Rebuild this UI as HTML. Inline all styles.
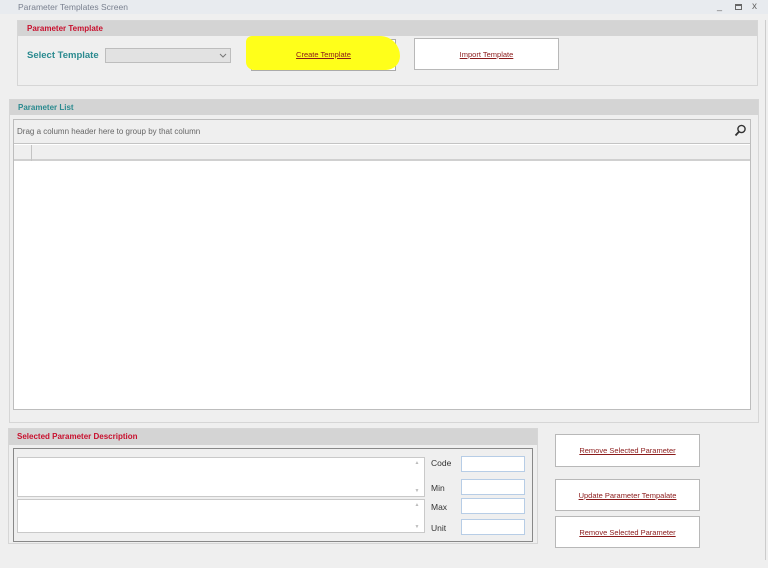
<!DOCTYPE html>
<html><head><meta charset="utf-8"><style>
*{box-sizing:border-box;margin:0;padding:0}
body{width:768px;height:568px;background:#efefef;font-family:"Liberation Sans",sans-serif;position:relative;overflow:hidden}
.a{position:absolute}
.hdr{background:#d4d4d4;font-size:8px;font-weight:bold;padding-left:9px;line-height:16px}
.box{border:1px solid #d6d6d6}
.btn{background:#fff;border:1px solid #b8b8b8;font-size:7.5px;text-decoration:underline;color:#8b1a1a;display:flex;align-items:center;justify-content:center}
.ta{background:#fff;border:1px solid #c9c9c9}
.inp{background:#fff;border:1px solid #b7cde6;width:64px;height:16px;left:461px}
.lbl{font-size:8.5px;color:#333;left:431px}
.sb{position:absolute;right:2px;width:10px;font-size:5px;color:#bbb;text-align:center}
</style></head><body>
<div class="a" style="left:0;top:0;width:768px;height:14px;background:#e8ebef"></div>
<div class="a" style="left:18px;top:2px;font-size:8.5px;color:#7a8190">Parameter Templates Screen</div>
<div class="a" style="left:717px;top:1px;font-size:9px;color:#666">_</div>
<div class="a" style="left:735px;top:4px;width:7px;height:6px;border:1px solid #666;border-top-width:2px"></div>
<div class="a" style="left:752px;top:1px;font-size:10px;color:#666">x</div>
<div class="a" style="left:765px;top:20px;width:1px;height:540px;background:#ccc"></div>

<div class="a box" style="left:17px;top:20px;width:741px;height:66px"></div>
<div class="a hdr" style="left:18px;top:21px;width:739px;height:15px;color:#c8102e">Parameter Template</div>
<div class="a" style="left:27px;top:50px;font-size:9.5px;font-weight:bold;color:#2a8a8f">Select Template</div>
<div class="a" style="left:105px;top:48px;width:126px;height:15px;background:#e2e2e2;border:1px solid #bdbdbd"></div>
<svg class="a" style="left:219px;top:53px" width="8" height="5" viewBox="0 0 8 5"><path d="M1 1L4 4L7 1" fill="none" stroke="#777" stroke-width="1"/></svg>
<div class="a" style="left:251px;top:39px;width:145px;height:32px;border:1px solid #aaa;background:#fff"></div>
<div class="a" style="left:246px;top:36px;width:154px;height:34px;background:#ffff1a;border-radius:6px 20px 14px 8px"></div>
<div class="a" style="left:251px;top:39px;width:145px;height:31px;font-size:7.5px;text-decoration:underline;color:#8b1a1a;display:flex;align-items:center;justify-content:center">Create Template</div>
<div class="a btn" style="left:414px;top:38px;width:145px;height:32px">Import Template</div>

<div class="a box" style="left:9px;top:99px;width:750px;height:324px"></div>
<div class="a hdr" style="left:10px;top:100px;width:748px;height:15px;color:#2a8a8f;padding-left:8px">Parameter List</div>
<div class="a" style="left:13px;top:119px;width:738px;height:291px;border:1px solid #bdbdbd;background:#fff"></div>
<div class="a" style="left:14px;top:120px;width:736px;height:24px;background:#efefef;border-bottom:1px solid #c4c4c4;font-size:8px;color:#666;padding:7px 0 0 3px">Drag a column header here to group by that column</div>
<svg class="a" style="left:734px;top:124px" width="13" height="13" viewBox="0 0 13 13"><circle cx="7.5" cy="5" r="3.6" fill="none" stroke="#333" stroke-width="1.4"/><line x1="5" y1="7.6" x2="1.5" y2="11.5" stroke="#333" stroke-width="1.8"/></svg>
<div class="a" style="left:14px;top:145px;width:736px;height:16px;background:#efefef;border-bottom:2px solid #d0d0d0"></div>
<div class="a" style="left:31px;top:145px;width:1px;height:16px;background:#c4c4c4"></div>

<div class="a box" style="left:8px;top:428px;width:530px;height:116px"></div>
<div class="a hdr" style="left:9px;top:429px;width:528px;height:16px;color:#c8102e;padding-left:8px">Selected Parameter Description</div>
<div class="a" style="left:13px;top:448px;width:520px;height:94px;border:1px solid #888"></div>
<div class="a ta" style="left:17px;top:457px;width:408px;height:40px"><div class="sb" style="top:2px">&#9650;</div><div class="sb" style="bottom:2px">&#9660;</div></div>
<div class="a ta" style="left:17px;top:499px;width:408px;height:34px"><div class="sb" style="top:2px">&#9650;</div><div class="sb" style="bottom:2px">&#9660;</div></div>
<div class="a lbl" style="top:458px">Code</div>
<div class="a lbl" style="top:483px">Min</div>
<div class="a lbl" style="top:502px">Max</div>
<div class="a lbl" style="top:523px">Unit</div>
<div class="a inp" style="top:456px"></div>
<div class="a inp" style="top:479px"></div>
<div class="a inp" style="top:498px"></div>
<div class="a inp" style="top:519px"></div>

<div class="a btn" style="left:555px;top:434px;width:145px;height:33px">Remove Selected Parameter</div>
<div class="a btn" style="left:555px;top:479px;width:145px;height:32px">Update Parameter Tempalate</div>
<div class="a btn" style="left:555px;top:516px;width:145px;height:32px">Remove Selected Parameter</div>
</body></html>
